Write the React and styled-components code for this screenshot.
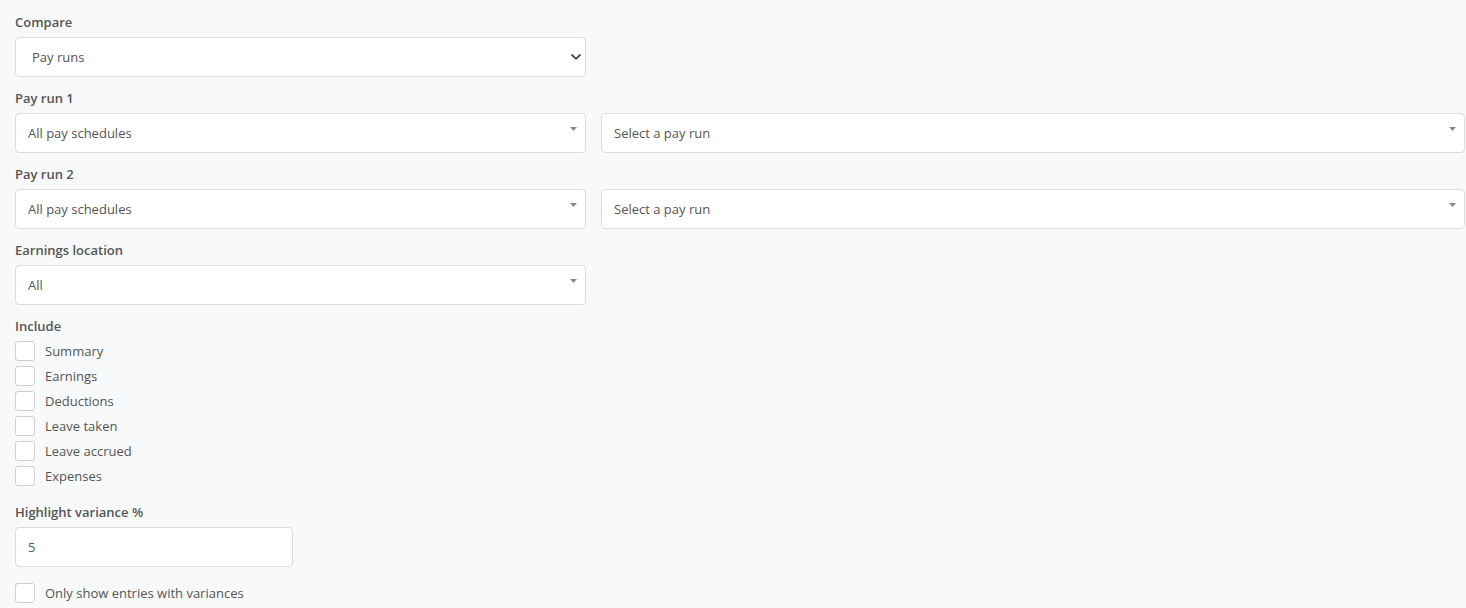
import React, { useState } from 'react'
import styled, { createGlobalStyle } from 'styled-components'

const GlobalStyle = createGlobalStyle`
  html, body {
    margin: 0;
    padding: 0;
    background: #f8f9fa;
  }
  body {
    font-family: "Open Sans", "Liberation Sans", sans-serif;
    font-size: 13px;
    color: #555;
  }
  * { box-sizing: border-box; }
`

const includeOptions = ['Summary', 'Earnings', 'Deductions', 'Leave taken', 'Leave accrued', 'Expenses']

const App = () => {
  const [checked, setChecked] = useState({})
  const [variance, setVariance] = useState('5')

  const toggle = (key) => setChecked((c) => ({ ...c, [key]: !c[key] }))

  return (
    <>
      <GlobalStyle />
      <PageStyle>
        <GroupStyle>
          <LabelStyle>Compare</LabelStyle>
          <RowStyle>
            <SelectWrap width="571px">
              <NativeSelect defaultValue="payruns" indent>
                <option value="payruns">Pay runs</option>
                <option value="employees">Employees</option>
              </NativeSelect>
              <Chevron width="10" height="6" viewBox="0 0 10 6">
                <path d="M1 1 L5 4.8 L9 1" fill="none" stroke="#4a4a4a" strokeWidth="1.8" strokeLinecap="round" strokeLinejoin="round" />
              </Chevron>
            </SelectWrap>
          </RowStyle>
        </GroupStyle>

        {['Pay run 1', 'Pay run 2'].map((label) => (
          <GroupStyle key={label}>
            <LabelStyle>{label}</LabelStyle>
            <RowStyle>
              <SelectWrap width="571px">
                <NativeSelect defaultValue="all">
                  <option value="all">All pay schedules</option>
                </NativeSelect>
                <Caret width="7" height="4" viewBox="0 0 7 4">
                  <path d="M0 0 H7 L3.5 4 Z" fill="#888" />
                </Caret>
              </SelectWrap>
              <SelectWrap grow>
                <NativeSelect defaultValue="">
                  <option value="">Select a pay run</option>
                </NativeSelect>
                <Caret width="7" height="4" viewBox="0 0 7 4">
                  <path d="M0 0 H7 L3.5 4 Z" fill="#888" />
                </Caret>
              </SelectWrap>
            </RowStyle>
          </GroupStyle>
        ))}

        <GroupStyle>
          <LabelStyle>Earnings location</LabelStyle>
          <RowStyle>
            <SelectWrap width="571px">
              <NativeSelect defaultValue="all">
                <option value="all">All</option>
              </NativeSelect>
              <Caret width="7" height="4" viewBox="0 0 7 4">
                <path d="M0 0 H7 L3.5 4 Z" fill="#888" />
              </Caret>
            </SelectWrap>
          </RowStyle>
        </GroupStyle>

        <GroupStyle spacing="16px">
          <LabelStyle>Include</LabelStyle>
          <CheckListStyle>
            {includeOptions.map((opt) => (
              <CheckRow key={opt}>
                <CheckBox checked={!!checked[opt]} onChange={() => toggle(opt)} />
                <span>{opt}</span>
              </CheckRow>
            ))}
          </CheckListStyle>
        </GroupStyle>

        <GroupStyle spacing="16px">
          <LabelStyle>Highlight variance %</LabelStyle>
          <TextInput value={variance} onChange={(e) => setVariance(e.target.value)} />
        </GroupStyle>

        <CheckRow>
          <CheckBox checked={!!checked.only} onChange={() => toggle('only')} />
          <span>Only show entries with variances</span>
        </CheckRow>
      </PageStyle>
    </>
  )
}

const PageStyle = styled.div`
  padding: 12px 1px 0 15px;
  display: flex;
  flex-direction: column;
`

const GroupStyle = styled.div`
  display: flex;
  flex-direction: column;
  margin-bottom: ${(p) => p.spacing || '11px'};
`

const LabelStyle = styled.label`
  font-weight: 600;
  font-size: 13px;
  line-height: 20px;
  color: #555;
  margin-bottom: 5px;
`

const RowStyle = styled.div`
  display: flex;
  gap: 15px;
`

const SelectWrap = styled.div`
  position: relative;
  width: ${(p) => p.width || 'auto'};
  flex: ${(p) => (p.grow ? '1' : 'none')};
`

const NativeSelect = styled.select`
  appearance: none;
  -webkit-appearance: none;
  width: 100%;
  height: 40px;
  background: #fff;
  border: 1px solid #dcdcdc;
  border-radius: 4px;
  padding: 0 30px 0 ${(p) => (p.indent ? '16px' : '12px')};
  font-family: "Open Sans", "Liberation Sans", sans-serif;
  font-size: 13px;
  color: #555;
  outline: none;
`

const Chevron = styled.svg`
  position: absolute;
  right: 5px;
  top: 17px;
  pointer-events: none;
`

const Caret = styled.svg`
  position: absolute;
  right: 9px;
  top: 14px;
  pointer-events: none;
`

const CheckListStyle = styled.div`
  display: flex;
  flex-direction: column;
  gap: 5px;
`

const CheckRow = styled.label`
  display: flex;
  align-items: center;
  gap: 10px;
  height: 20px;
  font-size: 13px;
  color: #555;
  cursor: pointer;
`

const CheckBox = styled.input.attrs({ type: 'checkbox' })`
  appearance: none;
  -webkit-appearance: none;
  margin: 0;
  width: 20px;
  height: 20px;
  background: #fff;
  border: 1px solid #cfcfcf;
  border-radius: 3px;
  &:checked {
    background: #3b8fd9;
    border-color: #3b8fd9;
  }
`

const TextInput = styled.input.attrs({ type: 'text' })`
  width: 278px;
  height: 40px;
  background: #fff;
  border: 1px solid #dcdcdc;
  border-radius: 4px;
  padding: 0 12px;
  font-family: "Open Sans", "Liberation Sans", sans-serif;
  font-size: 13px;
  color: #555;
  outline: none;
`

export default App
